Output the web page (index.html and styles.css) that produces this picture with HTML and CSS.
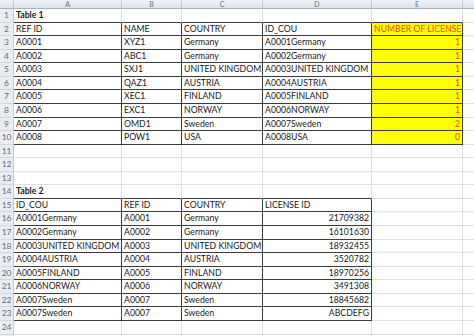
FILE: index.html
```html
<!DOCTYPE html>
<html>
<head>
<meta charset="utf-8">
<link rel="stylesheet" href="styles.css">
</head>
<body>
<div class="sheet">
  <div class="row head">
    <div class="c rn corner"></div><div class="c ch">A</div><div class="c ch">B</div><div class="c ch">C</div><div class="c ch">D</div><div class="c ch">E</div><div class="c ch"></div>
  </div>
  <div class="row">
    <div class="c rn">1</div><div class="c t bold">Table 1</div><div class="c t"></div><div class="c t"></div><div class="c t"></div><div class="c t"></div><div class="c"></div>
  </div>
  <div class="row">
    <div class="c rn">2</div><div class="c b">REF ID</div><div class="c b">NAME</div><div class="c b">COUNTRY</div><div class="c b">ID_COU</div><div class="c b y red">NUMBER OF LICENSE</div><div class="c"></div>
  </div>
  <div class="row">
    <div class="c rn">3</div><div class="c b">A0001</div><div class="c b">XYZ1</div><div class="c b">Germany</div><div class="c b">A0001Germany</div><div class="c b y red r">1</div><div class="c"></div>
  </div>
  <div class="row">
    <div class="c rn">4</div><div class="c b">A0002</div><div class="c b">ABC1</div><div class="c b">Germany</div><div class="c b">A0002Germany</div><div class="c b y red r">1</div><div class="c"></div>
  </div>
  <div class="row">
    <div class="c rn">5</div><div class="c b">A0003</div><div class="c b">SXJ1</div><div class="c b">UNITED KINGDOM</div><div class="c b">A0003UNITED KINGDOM</div><div class="c b y red r">1</div><div class="c"></div>
  </div>
  <div class="row">
    <div class="c rn">6</div><div class="c b">A0004</div><div class="c b">QAZ1</div><div class="c b">AUSTRIA</div><div class="c b">A0004AUSTRIA</div><div class="c b y red r">1</div><div class="c"></div>
  </div>
  <div class="row">
    <div class="c rn">7</div><div class="c b">A0005</div><div class="c b">XEC1</div><div class="c b">FINLAND</div><div class="c b">A0005FINLAND</div><div class="c b y red r">1</div><div class="c"></div>
  </div>
  <div class="row">
    <div class="c rn">8</div><div class="c b">A0006</div><div class="c b">EXC1</div><div class="c b">NORWAY</div><div class="c b">A0006NORWAY</div><div class="c b y red r">1</div><div class="c"></div>
  </div>
  <div class="row">
    <div class="c rn">9</div><div class="c b">A0007</div><div class="c b">OMD1</div><div class="c b">Sweden</div><div class="c b">A0007Sweden</div><div class="c b y red r">2</div><div class="c"></div>
  </div>
  <div class="row">
    <div class="c rn">10</div><div class="c b">A0008</div><div class="c b">POW1</div><div class="c b">USA</div><div class="c b">A0008USA</div><div class="c b y red r">0</div><div class="c"></div>
  </div>
  <div class="row">
    <div class="c rn">11</div><div class="c"></div><div class="c"></div><div class="c"></div><div class="c"></div><div class="c"></div><div class="c"></div>
  </div>
  <div class="row">
    <div class="c rn">12</div><div class="c"></div><div class="c"></div><div class="c"></div><div class="c"></div><div class="c"></div><div class="c"></div>
  </div>
  <div class="row">
    <div class="c rn">13</div><div class="c"></div><div class="c"></div><div class="c"></div><div class="c"></div><div class="c"></div><div class="c"></div>
  </div>
  <div class="row">
    <div class="c rn">14</div><div class="c t bold">Table 2</div><div class="c t"></div><div class="c t"></div><div class="c t"></div><div class="c"></div><div class="c"></div>
  </div>
  <div class="row">
    <div class="c rn">15</div><div class="c b">ID_COU</div><div class="c b">REF ID</div><div class="c b">COUNTRY</div><div class="c b">LICENSE ID</div><div class="c"></div><div class="c"></div>
  </div>
  <div class="row">
    <div class="c rn">16</div><div class="c b">A0001Germany</div><div class="c b">A0001</div><div class="c b">Germany</div><div class="c b r">21709382</div><div class="c"></div><div class="c"></div>
  </div>
  <div class="row">
    <div class="c rn">17</div><div class="c b">A0002Germany</div><div class="c b">A0002</div><div class="c b">Germany</div><div class="c b r">16101630</div><div class="c"></div><div class="c"></div>
  </div>
  <div class="row">
    <div class="c rn">18</div><div class="c b">A0003UNITED KINGDOM</div><div class="c b">A0003</div><div class="c b">UNITED KINGDOM</div><div class="c b r">18932455</div><div class="c"></div><div class="c"></div>
  </div>
  <div class="row">
    <div class="c rn">19</div><div class="c b">A0004AUSTRIA</div><div class="c b">A0004</div><div class="c b">AUSTRIA</div><div class="c b r">3520782</div><div class="c"></div><div class="c"></div>
  </div>
  <div class="row">
    <div class="c rn">20</div><div class="c b">A0005FINLAND</div><div class="c b">A0005</div><div class="c b">FINLAND</div><div class="c b r">18970256</div><div class="c"></div><div class="c"></div>
  </div>
  <div class="row">
    <div class="c rn">21</div><div class="c b">A0006NORWAY</div><div class="c b">A0006</div><div class="c b">NORWAY</div><div class="c b r">3491308</div><div class="c"></div><div class="c"></div>
  </div>
  <div class="row">
    <div class="c rn">22</div><div class="c b">A0007Sweden</div><div class="c b">A0007</div><div class="c b">Sweden</div><div class="c b r">18845682</div><div class="c"></div><div class="c"></div>
  </div>
  <div class="row">
    <div class="c rn">23</div><div class="c b">A0007Sweden</div><div class="c b">A0007</div><div class="c b">Sweden</div><div class="c b r">ABCDEFG</div><div class="c"></div><div class="c"></div>
  </div>
  <div class="row">
    <div class="c rn">24</div><div class="c"></div><div class="c"></div><div class="c"></div><div class="c"></div><div class="c"></div><div class="c"></div>
  </div>
  <div class="row">
    <div class="c rn"></div><div class="c"></div><div class="c"></div><div class="c"></div><div class="c"></div><div class="c"></div><div class="c"></div>
  </div>
</div>
</body>
</html>
```
FILE: styles.css
```css
html, body {
  margin: 0;
  padding: 0;
  background: #ffffff;
}
.sheet {
  width: 474px;
  height: 336px;
  overflow: hidden;
  display: flex;
  flex-direction: column;
  font-family: Lato, "Open Sans", sans-serif;
  font-size: 8.7px;
  color: #1a1a1a;
}
.row {
  display: grid;
  grid-template-columns: 14px 108px 60px 81px 109px 91px 30px;
  height: 13.57px;
  flex: none;
}
.row.head {
  height: 9px;
}
.c {
  box-sizing: border-box;
  border-right: 1px solid #dcdfe3;
  border-bottom: 1px solid #dcdfe3;
  padding: 0 2px;
  white-space: nowrap;
  overflow: hidden;
  line-height: 12.6px;
}
.head .c {
  background: linear-gradient(#f0f3f8, #dde3ec);
  border-right: 1px solid #c4cad3;
  border-bottom: 1px solid #a9b1bd;
  color: #66717f;
  text-align: center;
  line-height: 8px;
  font-size: 7px;
  padding: 0;
}
.ch {
  display: flex;
  align-items: center;
  justify-content: center;
}
.rn {
  background: #e9edf2;
  border-right: 1px solid #c4cad3;
  border-bottom: 1px solid #d3d8df;
  color: #5f6b7c;
  text-align: center;
  padding: 0;
  font-size: 8.4px;
}
.corner {
  background: #e1e6ed;
}
.t {
  border-bottom: 1px solid #3c3c3c;
}
.b {
  border-right: 1px solid #3c3c3c;
  border-bottom: 1px solid #3c3c3c;
}
.bold {
  font-weight: bold;
}
.y {
  background: #ffff00;
}
.red {
  color: #f04a00;
}
.r {
  text-align: right;
}
```
